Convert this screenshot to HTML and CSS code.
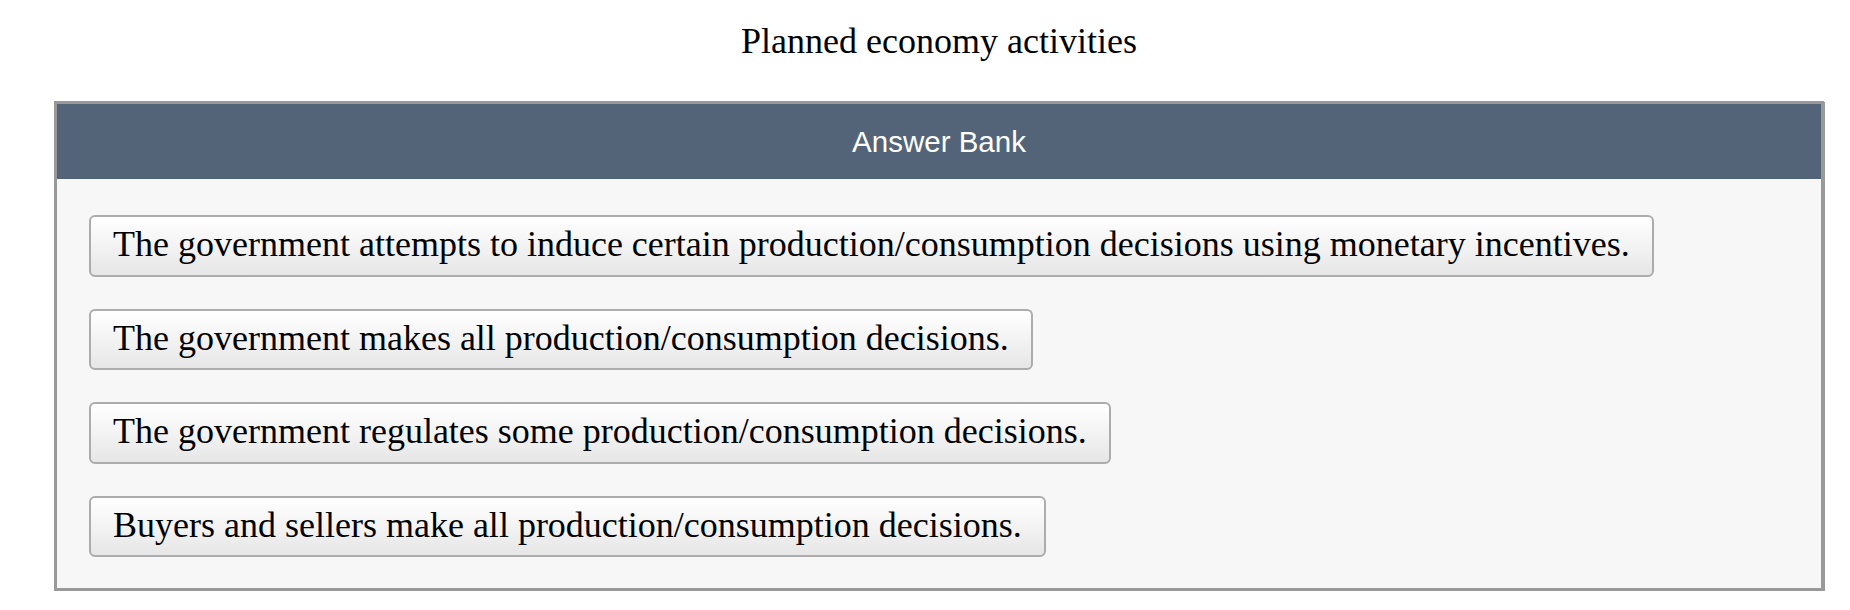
FILE: index.html
```html
<!DOCTYPE html>
<html>
<head>
<meta charset="utf-8">
<link rel="stylesheet" href="styles.css">
</head>
<body>
<div class="page">
  <div class="title">Planned economy activities</div>
  <div class="bank">
    <div class="bank-header">Answer Bank</div>
    <div class="bank-body">
      <div class="chip">The government attempts to induce certain production/consumption decisions using monetary incentives.</div>
      <div class="chip">The government makes all production/consumption decisions.</div>
      <div class="chip">The government regulates some production/consumption decisions.</div>
      <div class="chip">Buyers and sellers make all production/consumption decisions.</div>
    </div>
  </div>
</div>
</body>
</html>
```
FILE: styles.css
```css
html, body {
  margin: 0;
  padding: 0;
  background: #ffffff;
}
.page {
  margin-left: 54px;
  width: 1770px;
}
.title {
  font-family: "Liberation Serif", "Times New Roman", serif;
  font-size: 36px;
  line-height: 40px;
  color: #000;
  text-align: center;
  padding-top: 21px;
  margin-bottom: 40px;
}
.bank {
  border: 3px solid #999999;
  box-shadow: 1px 1px 0 #999999;
  background: #f7f7f7;
}
.bank-header {
  background: #536479;
  color: #ffffff;
  height: 75px;
  display: flex;
  align-items: center;
  justify-content: center;
  padding-top: 1px;
  box-sizing: border-box;
  font-family: "Liberation Sans", Arial, sans-serif;
  font-size: 29.5px;
  line-height: 34px;
}
.bank-body {
  display: flex;
  flex-direction: column;
  align-items: flex-start;
  gap: 32px;
  padding: 36px 0 31px 32px;
}
.chip {
  font-family: "Liberation Serif", "Times New Roman", serif;
  font-size: 36px;
  line-height: 40px;
  color: #000;
  border: 2px solid #acacac;
  border-radius: 6px;
  padding: 7px 22px 10.5px 22px;
  background: linear-gradient(to bottom, #ffffff 0%, #f3f3f3 50%, #e6e6e6 100%);
  white-space: nowrap;
}
```
